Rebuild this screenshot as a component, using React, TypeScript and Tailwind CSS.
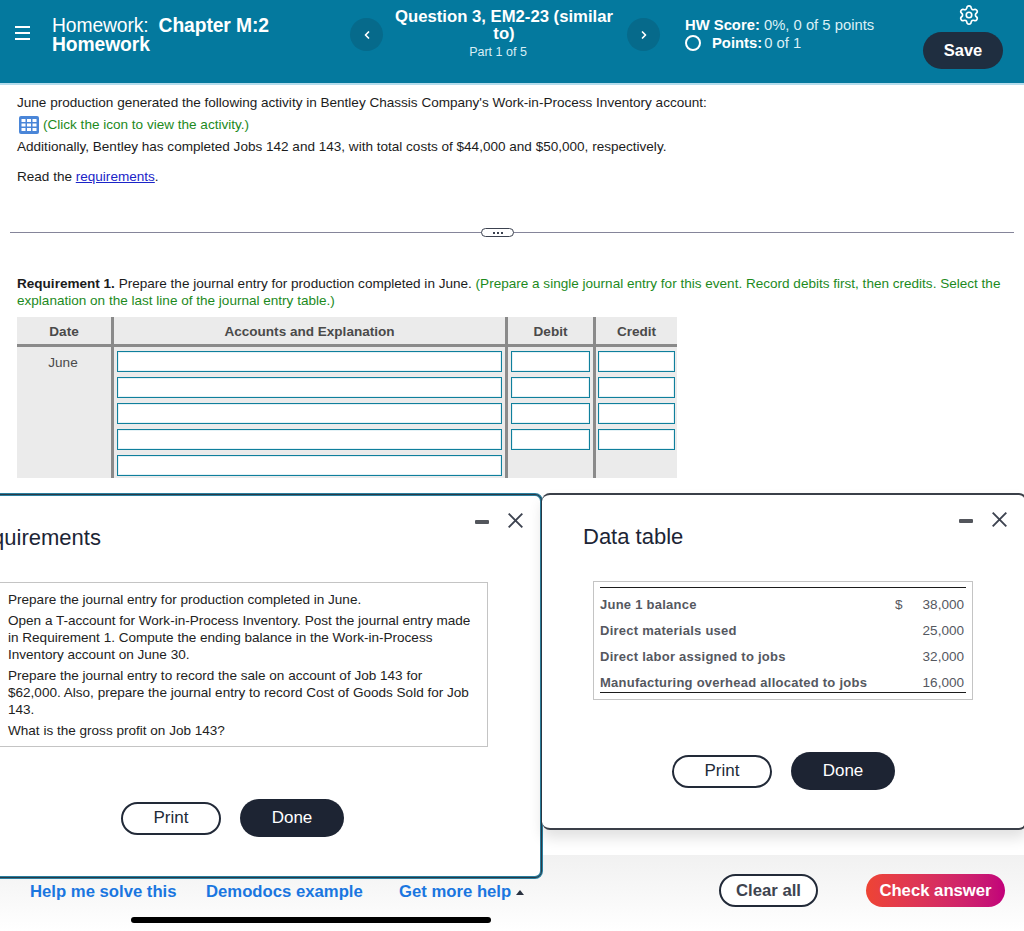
import { ChevronLeft, ChevronRight, Settings } from "lucide-react";

const font = { fontFamily: '"Liberation Sans", Arial, sans-serif' };

function CellInput({ className }: { className: string }) {
  return <div className={`h-[21px] bg-white border border-[#0f7f9c] shadow-[inset_0_0_0_1px_#e4f2f6] ${className}`} />;
}

function DialogControls({ right }: { right: string }) {
  return (
    <div className={`absolute top-[17px] flex items-center gap-[19px] ${right}`}>
      <div className="w-[14px] h-[4px] mt-[3px] bg-[#53565c] rounded-[1px]" />
      <svg width="15" height="15" viewBox="0 0 15 15" className="text-[#3d4350]">
        <path d="M0.7 0.7 L14.3 14.3 M14.3 0.7 L0.7 14.3" stroke="currentColor" strokeWidth="1.9" fill="none" />
      </svg>
    </div>
  );
}

function DialogButtons({ gap }: { gap: string }) {
  return (
    <div className={`flex items-center justify-center ${gap}`}>
      <div className="w-[100px] h-[33px] rounded-full border-2 border-[#222a38] bg-white flex items-center justify-center text-[17px] text-[#222a38]">
        Print
      </div>
      <div className="w-[104px] h-[38px] rounded-full bg-[#1d2433] flex items-center justify-center text-[17px] text-white">
        Done
      </div>
    </div>
  );
}

const dataRows = [
  { label: "June 1 balance", sign: "$", value: "38,000" },
  { label: "Direct materials used", sign: "", value: "25,000" },
  { label: "Direct labor assigned to jobs", sign: "", value: "32,000" },
  { label: "Manufacturing overhead allocated to jobs", sign: "", value: "16,000" },
];

export default function App() {
  return (
    <div className="relative w-[1024px] h-[931px] overflow-hidden bg-white flex flex-col text-[13.56px] text-[#1c1c1c]" style={font}>
      {/* Top bar */}
      <header className="h-[85px] shrink-0 bg-[#04799e] border-b-2 border-[#b5dcec] flex text-white">
        <div className="w-[52px] pl-[15px] pt-[26px] shrink-0">
          <div className="w-[15px] flex flex-col gap-[4px]">
            <div className="h-[2px] bg-white" />
            <div className="h-[2px] bg-white" />
            <div className="h-[2px] bg-white" />
          </div>
        </div>
        <div className="w-[298px] shrink-0 pt-[16px] text-[19.3px] leading-[19px] tracking-[-0.1px]">
          <div className="flex">
            <span className="mr-[10px]">Homework:</span>
            <span className="font-bold">Chapter M:2</span>
          </div>
          <div className="font-bold">Homework</div>
        </div>
        <div className="w-[33px] h-[33px] mt-[18px] shrink-0 rounded-full bg-[#066a8b] flex items-center justify-center">
          <ChevronLeft className="w-[12px] h-[12px]" strokeWidth={3.5} />
        </div>
        <div className="w-[244px] shrink-0 pt-[8px] pr-[2px] text-center">
          <div className="text-[16.7px] leading-[17px] font-bold px-[4px]">Question 3, EM2-23 (similar to)</div>
          <div className="text-[12.5px] leading-[16px] mt-[2px] pr-[12px] text-[#d9eef5]">Part 1 of 5</div>
        </div>
        <div className="w-[33px] h-[33px] mt-[18px] shrink-0 rounded-full bg-[#066a8b] flex items-center justify-center">
          <ChevronRight className="w-[12px] h-[12px]" strokeWidth={3.5} />
        </div>
        <div className="w-[263px] shrink-0 pl-[25px] pt-[16px] text-[14.8px] leading-[18px] text-[#dcf0f6]">
          <div>
            <span className="font-bold text-white">HW Score:</span> 0%, 0 of 5 points
          </div>
          <div className="flex items-center">
            <div className="w-[16px] h-[16px] rounded-full border-2 border-white mr-[11px]" />
            <span className="font-bold text-white mr-[2px]">Points:</span> 0 of 1
          </div>
        </div>
        <div className="w-[80px] shrink-0 flex flex-col items-center pt-[4px]">
          <Settings className="w-[22px] h-[22px] ml-[12px]" strokeWidth={1.8} />
          <div className="w-[80px] h-[37px] mt-[6px] rounded-full bg-[#1f2e40] flex items-center justify-center text-[16.5px] font-bold">
            Save
          </div>
        </div>
      </header>

      {/* Question body */}
      <main className="flex-1 pt-[7px]">
        <div className="px-[17px] leading-[22px]">
          <div>June production generated the following activity in Bentley Chassis Company's Work-in-Process Inventory account:</div>
          <div className="flex items-center text-[#1d8a1d]">
            <svg width="20" height="18" viewBox="0 0 20 18" className="ml-[2px] mr-[4px]">
              <rect x="0" y="0" width="20" height="18" rx="2" fill="#4a86d8" />
              <g fill="#fff">
                <rect x="2.5" y="3" width="4" height="3" />
                <rect x="8" y="3" width="4" height="3" />
                <rect x="13.5" y="3" width="4" height="3" />
                <rect x="2.5" y="7.5" width="4" height="3" />
                <rect x="8" y="7.5" width="4" height="3" />
                <rect x="13.5" y="7.5" width="4" height="3" />
                <rect x="2.5" y="12" width="4" height="3" />
                <rect x="8" y="12" width="4" height="3" />
                <rect x="13.5" y="12" width="4" height="3" />
              </g>
            </svg>
            (Click the icon to view the activity.)
          </div>
          <div>Additionally, Bentley has completed Jobs 142 and 143, with total costs of $44,000 and $50,000, respectively.</div>
          <div className="mt-[8px]">
            Read the <span className="text-[#1a24c8] underline">requirements</span>.
          </div>
        </div>

        <div className="relative mx-[10px] mt-[44px] h-[1px] bg-[#85859a]">
          <div className="absolute left-[471px] top-[-4px] w-[33px] h-[9px] rounded-full border border-[#3c4250] bg-white flex items-center justify-center gap-[2px]">
            <div className="w-[2px] h-[2px] bg-[#3c4250]" />
            <div className="w-[2px] h-[2px] bg-[#3c4250]" />
            <div className="w-[2px] h-[2px] bg-[#3c4250]" />
          </div>
        </div>

        <div className="px-[17px] mt-[42px] leading-[17px]">
          <span className="font-bold">Requirement 1.</span> Prepare the journal entry for production completed in June.{" "}
          <span className="text-[#1d8a1d]">
            (Prepare a single journal entry for this event. Record debits first, then credits. Select the explanation on the last line of the journal entry table.)
          </span>
        </div>

        {/* Journal table */}
        <div className="mt-[8px] ml-[17px] w-[660px] bg-[#ebebeb] text-[#4a4a4a]">
          <div className="flex h-[30px] border-b-[3px] border-[#8a8a8a] font-bold">
            <div className="w-[94px] pt-[3px] flex items-center justify-center">Date</div>
            <div className="w-[397px] pt-[3px] border-x-[3px] border-[#8a8a8a] flex items-center justify-center">Accounts and Explanation</div>
            <div className="w-[88px] pt-[3px] border-r-[3px] border-[#8a8a8a] flex items-center justify-center">Debit</div>
            <div className="flex-1 pt-[3px] flex items-center justify-center">Credit</div>
          </div>
          <div className="flex h-[131px]">
            <div className="w-[94px] pt-[6px] pr-[2px] text-center">June</div>
            <div className="w-[397px] border-x-[3px] border-[#8a8a8a] pt-[4px] pl-[3px] flex flex-col gap-[5px]">
              {[0, 1, 2, 3, 4].map((i) => (
                <CellInput key={i} className="w-[385px]" />
              ))}
            </div>
            <div className="w-[88px] border-r-[3px] border-[#8a8a8a] pt-[4px] pl-[3px] flex flex-col gap-[5px]">
              {[0, 1, 2, 3].map((i) => (
                <CellInput key={i} className="w-[79px]" />
              ))}
            </div>
            <div className="flex-1 pt-[4px] pl-[2px] flex flex-col gap-[5px]">
              {[0, 1, 2, 3].map((i) => (
                <CellInput key={i} className="w-[77px]" />
              ))}
            </div>
          </div>
        </div>
      </main>

      {/* Footer */}
      <footer className="h-[76px] shrink-0 bg-gradient-to-b from-[#f1f1f1] to-white flex items-start pl-[30px] pr-[19px] pt-[19px] text-[16.7px] leading-[20px] font-bold whitespace-nowrap">
        <div className="text-[#1a76e0] flex mt-[8px]">
          <span className="w-[176px]">Help me solve this</span>
          <span className="w-[193px]">Demodocs example</span>
          <span className="flex items-center">
            Get more help
            <svg width="8" height="5" viewBox="0 0 8 5" className="ml-[5px]">
              <path d="M0 5 L4 0 L8 5 Z" fill="#2a3240" />
            </svg>
          </span>
        </div>
        <div className="ml-auto w-[99px] h-[33px] rounded-full border-2 border-[#222a38] bg-white flex items-center justify-center text-[#3e4450]">
          Clear all
        </div>
        <div className="ml-[48px] w-[139px] h-[33px] rounded-full bg-gradient-to-r from-[#ee4433] to-[#c2007a] flex items-center justify-center text-white">
          Check answer
        </div>
      </footer>
      <div className="absolute left-[131px] top-[917px] w-[360px] h-[6px] rounded-full bg-black" />

      {/* Requirements dialog */}
      <section className="absolute left-[-67px] top-[493px] w-[610px] h-[386px] rounded-[8px] bg-white border-[3px] border-[#2a7f9f] outline outline-1 outline-[#2b3a46] -outline-offset-2">
        <DialogControls right="right-[17px]" />
        <h2 className="pl-[28px] pt-[28px] text-[22px] leading-[28px] text-[#1c2535]">Requirements</h2>
        <div className="ml-[-3px] mt-[30px] w-[555px] h-[165px] border border-[#c4c4c4] pl-[74px] pr-[14px] pt-[8px] leading-[17px] text-[#222]">
          <p>Prepare the journal entry for production completed in June.</p>
          <p className="mt-[4px]">Open a T-account for Work-in-Process Inventory. Post the journal entry made in Requirement 1. Compute the ending balance in the Work-in-Process Inventory account on June 30.</p>
          <p className="mt-[4px]">Prepare the journal entry to record the sale on account of Job 143 for $62,000. Also, prepare the journal entry to record Cost of Goods Sold for Job 143.</p>
          <p className="mt-[4px]">What is the gross profit on Job 143?</p>
        </div>
        <div className="mt-[52px] ml-[185px] w-[223px]">
          <DialogButtons gap="gap-[19px]" />
        </div>
      </section>

      {/* Data table dialog */}
      <section className="absolute left-[542px] top-[493px] w-[485px] h-[337px] rounded-[8px] bg-white border-2 border-l-0 border-[#3a3f48] shadow-[0_8px_14px_rgba(0,0,0,0.12)]">
        <DialogControls right="right-[18px]" />
        <h2 className="pl-[41px] pt-[28px] text-[22px] leading-[28px] text-[#1c2535]">Data table</h2>
        <div className="ml-[51px] mt-[30px] w-[380px] h-[119px] border border-[#c4c4c4] px-[6px] pt-[5px] text-[#55585f]">
          <div className="border-y border-[#1c1c1c] h-[106px] pt-[4px]">
            {dataRows.map((row) => (
              <div key={row.label} className="flex h-[26px] items-center pr-[2px]">
                <span className="font-bold text-[13px] tracking-[0.25px] w-[295px]">{row.label}</span>
                <span className="w-[20px]">{row.sign}</span>
                <span className="flex-1 text-right">{row.value}</span>
              </div>
            ))}
          </div>
        </div>
        <div className="mt-[52px] ml-[130px] w-[223px]">
          <DialogButtons gap="gap-[19px]" />
        </div>
      </section>
    </div>
  );
}
